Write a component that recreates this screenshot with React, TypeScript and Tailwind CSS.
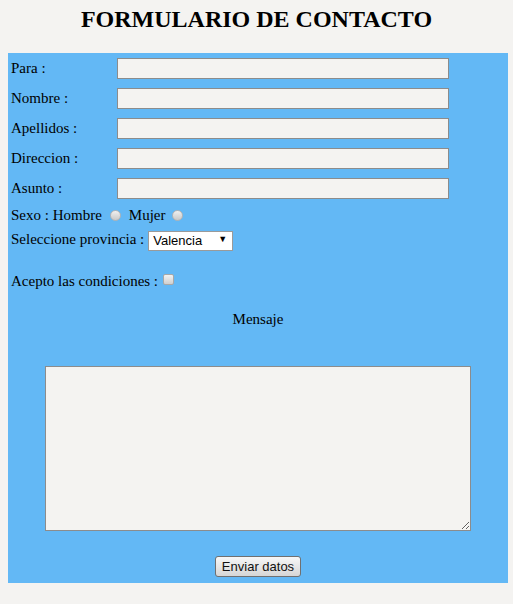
import { useState } from 'react'

const campos = ['Para', 'Nombre', 'Apellidos', 'Direccion', 'Asunto']

const provincias = ['Valencia', 'Alicante', 'Castellón', 'Madrid', 'Barcelona']

export default function App() {
  const [sexo, setSexo] = useState('')
  const [acepto, setAcepto] = useState(false)
  const [provincia, setProvincia] = useState('Valencia')

  return (
    <div className="min-h-[604px] bg-[#f4f3f1] text-black font-['Liberation_Serif','Times_New_Roman',serif]">
      {/* Titulo */}
      <h1 className="pt-[4px] text-center text-[24px] font-bold leading-[30px]">FORMULARIO DE CONTACTO</h1>

      {/* Panel del formulario */}
      <form
        onSubmit={e => e.preventDefault()}
        className="mt-[19px] ml-[8px] w-[500px] h-[530px] bg-[#63b8f5] pt-[5px] px-[3px] flex flex-col text-[15px]"
      >
        <div className="flex flex-col gap-[9px]">
          {campos.map(c => (
            <div key={c} className="flex items-center h-[21px]">
              <label className="w-[106px] leading-[21px]">{c} :</label>
              <input
                type="text"
                className="w-[332px] h-[21px] bg-[#f4f3f1] border border-[#8c8c8c] outline-none px-1 text-[13px] font-['Liberation_Sans',Arial,sans-serif]"
              />
            </div>
          ))}
        </div>

        {/* Sexo */}
        <div className="mt-[6px] h-[20px] flex items-center">
          <span>Sexo : Hombre</span>
          <input
            type="radio"
            name="sexo"
            checked={sexo === 'H'}
            onChange={() => setSexo('H')}
            className="appearance-none ml-[8px] w-[11px] h-[11px] rounded-full border border-[#b4b4b4] bg-gradient-to-b from-[#f0f0f0] to-[#c9c9c9] checked:bg-[#5a5a5a]"
          />
          <span className="ml-[8px]">Mujer</span>
          <input
            type="radio"
            name="sexo"
            checked={sexo === 'M'}
            onChange={() => setSexo('M')}
            className="appearance-none ml-[6px] w-[11px] h-[11px] rounded-full border border-[#b4b4b4] bg-gradient-to-b from-[#f0f0f0] to-[#c9c9c9] checked:bg-[#5a5a5a]"
          />
        </div>

        {/* Provincia */}
        <div className="mt-[4px] h-[20px] flex items-center">
          <span>Seleccione provincia :</span>
          <div className="relative ml-[4px] w-[85px] h-[20px]">
            <select
              value={provincia}
              onChange={e => setProvincia(e.target.value)}
              className="appearance-none w-full h-full bg-white border border-[#9a9a9a] pl-[4px] text-[13px] leading-[18px] outline-none font-['Liberation_Sans',Arial,sans-serif]"
            >
              {provincias.map(p => (
                <option key={p}>{p}</option>
              ))}
            </select>
            <span className="pointer-events-none absolute right-[6px] top-[5px] text-[9px] leading-[10px]">▼</span>
          </div>
        </div>

        {/* Condiciones */}
        <div className="mt-[22px] h-[20px] flex items-center">
          <span>Acepto las condiciones :</span>
          <input
            type="checkbox"
            checked={acepto}
            onChange={e => setAcepto(e.target.checked)}
            className="appearance-none ml-[5px] -mt-[4px] w-[11px] h-[11px] rounded-[2px] border border-[#a8a8a8] bg-gradient-to-b from-[#f2f2f2] to-[#cfcfcf] checked:bg-[#5a5a5a]"
          />
        </div>

        {/* Mensaje */}
        <div className="mt-[18px] h-[20px] leading-[20px] text-center">Mensaje</div>
        <textarea className="mt-[37px] ml-[34px] w-[426px] h-[165px] bg-[#f4f3f1] border border-[#8c8c8c] outline-none p-1 text-[13px] font-['Liberation_Sans',Arial,sans-serif]" />

        <button
          type="submit"
          className="mt-[25px] mx-auto w-[86px] h-[21px] rounded-[3px] border border-[#707070] bg-gradient-to-b from-[#f7f7f7] to-[#d6d6d6] text-[13px] leading-[19px] text-[#111] font-['Liberation_Sans',Arial,sans-serif]"
        >
          Enviar datos
        </button>
      </form>
    </div>
  )
}
